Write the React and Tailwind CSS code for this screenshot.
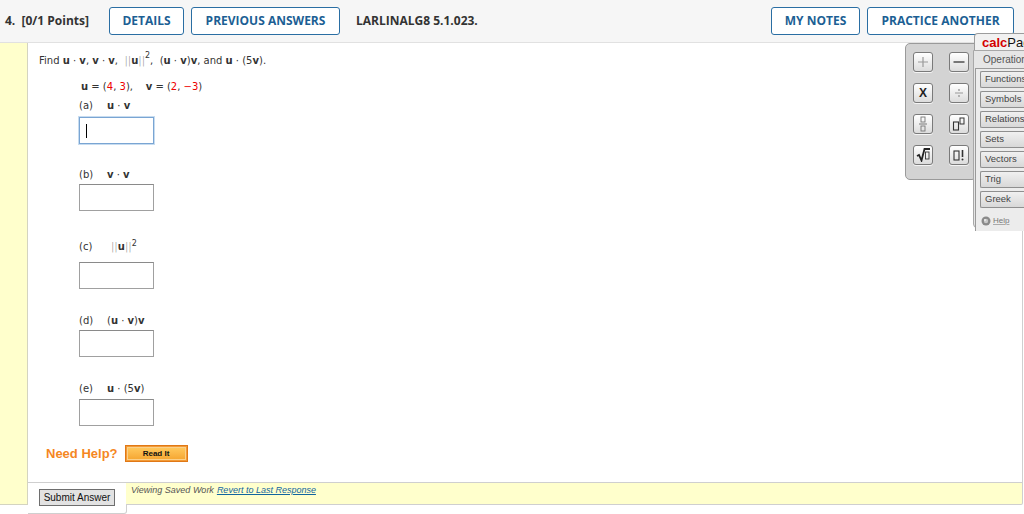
import React from 'react';

const hdrBtn =
  'h-[28px] flex items-center justify-center border-[1.5px] border-[#2a6ea3] rounded-[3px] bg-white text-[#1c5f94] text-[12px] font-bold';

function Bold({ children }) {
  return <span className="font-bold">{children}</span>;
}

function Norm({ children }) {
  return (
    <span>
      <span className="text-[#777] font-light">||</span>
      <Bold>{children}</Bold>
      <span className="text-[#777] font-light">||</span>
    </span>
  );
}

function AnswerBox({ focused }) {
  return (
    <div
      className={
        focused
          ? 'ml-[40px] w-[75px] h-[27px] border border-[#7aa5d3] shadow-[0_0_0_1px_#c7dcf0] bg-white flex items-center pl-[6px]'
          : 'ml-[40px] w-[75px] h-[27px] border border-[#a0a0a0] border-t-[#8a8a8a] bg-white'
      }
    >
      {focused && <span className="block w-[1px] h-[14px] bg-black" />}
    </div>
  );
}

function Label({ part, children, className = '' }) {
  return (
    <div className={`ml-[40px] h-[14px] flex items-center ${className}`}>
      <span className="w-[28px]">({part})</span>
      <span>{children}</span>
    </div>
  );
}

function Key({ children }) {
  return (
    <div className="w-[20px] h-[20px] rounded-[3px] border border-[#7a7a7a] bg-gradient-to-b from-white to-[#dcdcdc] flex items-center justify-center shadow-[0_1px_0_#f4f4f4]">
      {children}
    </div>
  );
}

function Tab({ children }) {
  return (
    <div className="ml-[4px] h-[17px] mb-[3px] border border-[#8f8f8f] rounded-l-[2px] border-r-0 bg-gradient-to-b from-[#f0f0f0] to-[#d8d8d8] flex items-center pl-[4px] text-[9.5px] text-[#444]">
      {children}
    </div>
  );
}

function CalcPad() {
  return (
    <>
      {/* key panel */}
      <div className="absolute left-[905px] top-[43px] w-[70px] h-[137px] bg-[#d3d3d3] border border-[#9a9a9a] rounded-l-[5px] rounded-br-[3px] grid grid-cols-2 gap-x-[11px] gap-y-[11px] pl-[7px] pt-[8px] content-start">
        <Key>
          <svg width="12" height="12" viewBox="0 0 12 12">
            <path d="M6 1v10M1 6h10" stroke="#9a9a9a" strokeWidth="1.2" />
          </svg>
        </Key>
        <Key>
          <svg width="12" height="12" viewBox="0 0 12 12">
            <path d="M0.5 6h11" stroke="#444" strokeWidth="1.4" />
          </svg>
        </Key>
        <Key>
          <span className="text-[12px] font-bold text-[#222]" style={{ fontFamily: '"Liberation Sans", Arial, sans-serif' }}>X</span>
        </Key>
        <Key>
          <svg width="12" height="12" viewBox="0 0 12 12">
            <path d="M2 6h8" stroke="#999" strokeWidth="1" />
            <circle cx="6" cy="3" r="0.9" fill="#999" />
            <circle cx="6" cy="9" r="0.9" fill="#999" />
          </svg>
        </Key>
        <Key>
          <svg width="12" height="16" viewBox="0 0 12 16">
            <rect x="4" y="1" width="4" height="5" fill="none" stroke="#777" strokeWidth="0.9" />
            <path d="M2 8h8" stroke="#777" strokeWidth="1" />
            <rect x="4" y="10" width="4" height="5" fill="none" stroke="#777" strokeWidth="0.9" />
          </svg>
        </Key>
        <Key>
          <svg width="14" height="14" viewBox="0 0 14 14">
            <rect x="1.5" y="5" width="5" height="8" fill="none" stroke="#333" strokeWidth="1.1" />
            <rect x="8" y="1" width="4" height="6" fill="none" stroke="#333" strokeWidth="1" />
          </svg>
        </Key>
        <Key>
          <svg width="15" height="14" viewBox="0 0 15 14">
            <path d="M1 8l2-1 2.5 5.5L8.5 1H14" fill="none" stroke="#222" strokeWidth="1.8" />
            <rect x="9.5" y="4" width="3.5" height="7" fill="none" stroke="#333" strokeWidth="0.9" />
          </svg>
        </Key>
        <Key>
          <svg width="14" height="14" viewBox="0 0 14 14">
            <rect x="2" y="3" width="5" height="9" fill="none" stroke="#333" strokeWidth="1.1" />
            <path d="M10.5 2v7" stroke="#333" strokeWidth="1.6" />
            <circle cx="10.5" cy="11.5" r="1" fill="#333" />
          </svg>
        </Key>
      </div>

      {/* tab column */}
      <div className="absolute left-[974px] top-[33px] w-[60px] h-[18px] bg-[#f1f1f1] border border-[#9c9c9c] border-b-0 rounded-tl-[4px] flex items-center pl-[7px] text-[13px] leading-none" style={{ fontFamily: '"Liberation Sans", Arial, sans-serif' }}>
        <span className="font-bold text-[#d40000]">calc</span>
        <span className="text-[#111]">Pad</span>
      </div>
      <div className="absolute left-[973px] top-[50px] w-[60px] h-[178px] bg-[#e6e6e6] border border-[#a8a8a8] rounded-bl-[4px]" style={{ fontFamily: '"Liberation Sans", Arial, sans-serif' }}>
        <div className="h-[17px] flex items-center pl-[9px] text-[10px] text-[#555]">Operations</div>
        <div className="ml-[1px] border-t border-l border-[#9a9a9a] pt-[2px] bg-[#ececec]">
          <Tab>Functions</Tab>
          <Tab>Symbols</Tab>
          <Tab>Relations</Tab>
          <Tab>Sets</Tab>
          <Tab>Vectors</Tab>
          <Tab>Trig</Tab>
          <Tab>Greek</Tab>
          <div className="h-[20px] flex items-center pl-[5px] gap-[2px] text-[8px] text-[#777]">
            <svg width="10" height="10" viewBox="0 0 10 10">
              <circle cx="5" cy="5" r="4.5" fill="#8a8a8a" />
              <circle cx="5" cy="5" r="2.2" fill="#c8c8c8" />
              <circle cx="4" cy="4" r="1" fill="#eee" />
            </svg>
            <span className="underline decoration-[#aaa]">Help</span>
          </div>
        </div>
      </div>
    </>
  );
}

export default function App() {
  return (
    <div className="relative w-[1024px] h-[514px] overflow-hidden bg-white">
      {/* header */}
      <div
        className="h-[43px] bg-[#f6f6f6] border-b border-[#e1e1e1] flex items-center pl-[5px] pr-[10px] text-[12px] text-[#333]"
        style={{ fontFamily: '"Open Sans", sans-serif' }}
      >
        <span className="font-bold w-[104px]">4.&nbsp; [0/1 Points]</span>
        <div className={`${hdrBtn} w-[75px]`}>DETAILS</div>
        <div className={`${hdrBtn} w-[149px] ml-[7px]`}>PREVIOUS ANSWERS</div>
        <span className="font-bold ml-[16px]">LARLINALG8 5.1.023.</span>
        <div className="flex-1" />
        <div className={`${hdrBtn} w-[89px]`}>MY NOTES</div>
        <div className={`${hdrBtn} w-[147px] ml-[7px]`}>PRACTICE ANOTHER</div>
      </div>

      {/* body */}
      <div className="flex items-start">
        <div className="w-[28px] h-[462px] shrink-0 bg-[#ffffcc] border-r border-b border-[#d4d4c0]" />
        <div className="w-[995px] flex flex-col">
          <div
            className="h-[439px] bg-white border-r border-[#cfcfcf] pl-[11px] pt-[10px] text-[10px] text-[#333]"
            style={{ fontFamily: '"DejaVu Sans", Verdana, sans-serif' }}
          >
            <div className="h-[14px] flex items-center whitespace-pre">
              Find <Bold>u</Bold> · <Bold>v</Bold>, <Bold>v</Bold> · <Bold>v</Bold>,  <Norm>u</Norm>
              <sup className="text-[8px] -top-[4px]">2</sup>,  (<Bold>u</Bold> · <Bold>v</Bold>)<Bold>v</Bold>, and <Bold>u</Bold> · (5<Bold>v</Bold>).
            </div>
            <div className="mt-[12px] ml-[42px] h-[14px] flex items-center whitespace-pre">
              <Bold>u</Bold> = (<span className="text-[#e00]">4</span>, <span className="text-[#e00]">3</span>),    <Bold>v</Bold> = (<span className="text-[#e00]">2</span>, <span className="text-[#e00]">−3</span>)
            </div>
            <Label part="a" className="mt-[5px]">
              <Bold>u</Bold> · <Bold>v</Bold>
            </Label>
            <div className="mt-[5px]">
              <AnswerBox focused />
            </div>
            <Label part="b" className="mt-[23px]">
              <Bold>v</Bold> · <Bold>v</Bold>
            </Label>
            <div className="mt-[3px]">
              <AnswerBox />
            </div>
            <Label part="c" className="mt-[28px]">
              <span className="ml-[4px]">
                <Norm>u</Norm>
                <sup className="text-[8px] -top-[4px]">2</sup>
              </span>
            </Label>
            <div className="mt-[9px]">
              <AnswerBox />
            </div>
            <Label part="d" className="mt-[24px]">
              (<Bold>u</Bold> · <Bold>v</Bold>)<Bold>v</Bold>
            </Label>
            <div className="mt-[3px]">
              <AnswerBox />
            </div>
            <Label part="e" className="mt-[24px]">
              <Bold>u</Bold> · (5<Bold>v</Bold>)
            </Label>
            <div className="mt-[4px]">
              <AnswerBox />
            </div>
            <div
              className="mt-[19px] ml-[7px] h-[17px] flex items-center gap-[7px]"
              style={{ fontFamily: '"Liberation Sans", Arial, sans-serif' }}
            >
              <span className="text-[13px] font-bold text-[#f5871f]">Need Help?</span>
              <div className="w-[63px] h-[17px] bg-[#f29a36] border border-[#e07816] p-[1px]">
                <div className="h-full bg-gradient-to-b from-[#ffc75a] to-[#f6a833] border border-[#fbd08a] flex items-center justify-center text-[8px] font-bold text-[#111]">
                  Read It
                </div>
              </div>
            </div>
          </div>

          {/* submit row */}
          <div className="flex items-start" style={{ fontFamily: '"Liberation Sans", Arial, sans-serif' }}>
            <div className="w-[99px] h-[32px] shrink-0 bg-white border border-l-0 border-[#cfcfcf] rounded-br-[3px] pl-[11px] pt-[6px]">
              <div className="w-[76px] h-[17px] bg-[#e2e2e2] border border-[#6e6e6e] flex items-center justify-center text-[10px] text-[#111]">
                Submit Answer
              </div>
            </div>
            <div className="flex-1 h-[23px] bg-[#ffffcc] border-t border-b border-r border-[#cfcfcf] rounded-br-[2px] flex items-center pl-[5px] text-[9px] italic text-[#555] -ml-[1px] pb-[6px]">
              <span>Viewing Saved Work</span>
              <span className="ml-[3px] text-[#11659f] underline">Revert to Last Response</span>
            </div>
          </div>
        </div>
      </div>

      <CalcPad />
    </div>
  );
}
